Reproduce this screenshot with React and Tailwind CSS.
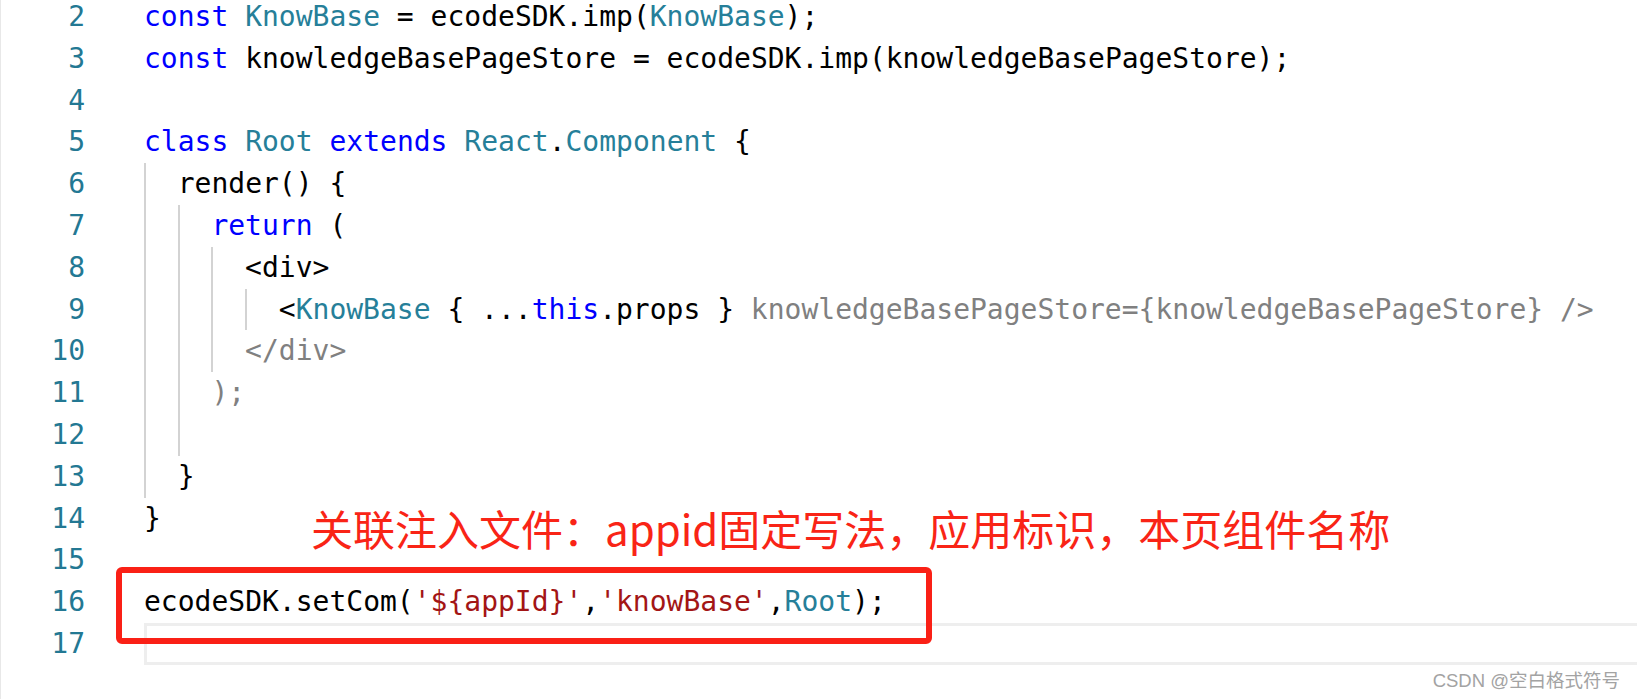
import React from 'react';

const C = {
  kw: 'text-[#0000ff]',
  type: 'text-[#267f99]',
  plain: 'text-[#000000]',
  gray: 'text-[#808080]',
  str: 'text-[#a31515]',
};

// each line: number, indent (columns), guide columns, tokens
const lines = [
  { n: 2, indent: 0, guides: [], tokens: [['const', 'kw'], [' ', 'plain'], ['KnowBase', 'type'], [' = ecodeSDK.imp(', 'plain'], ['KnowBase', 'type'], [');', 'plain']] },
  { n: 3, indent: 0, guides: [], tokens: [['const', 'kw'], [' knowledgeBasePageStore = ecodeSDK.imp(knowledgeBasePageStore);', 'plain']] },
  { n: 4, indent: 0, guides: [], tokens: [] },
  { n: 5, indent: 0, guides: [], tokens: [['class', 'kw'], [' ', 'plain'], ['Root', 'type'], [' ', 'plain'], ['extends', 'kw'], [' ', 'plain'], ['React', 'type'], ['.', 'plain'], ['Component', 'type'], [' {', 'plain']] },
  { n: 6, indent: 2, guides: [0], tokens: [['render() {', 'plain']] },
  { n: 7, indent: 4, guides: [0, 2], tokens: [['return', 'kw'], [' (', 'plain']] },
  { n: 8, indent: 6, guides: [0, 2, 4], tokens: [['<div>', 'plain']] },
  { n: 9, indent: 8, guides: [0, 2, 4, 6], tokens: [['<', 'plain'], ['KnowBase', 'type'], [' { ...', 'plain'], ['this', 'kw'], ['.props } ', 'plain'], ['knowledgeBasePageStore={knowledgeBasePageStore} />', 'gray']] },
  { n: 10, indent: 6, guides: [0, 2, 4], tokens: [['</div>', 'gray']] },
  { n: 11, indent: 4, guides: [0, 2], tokens: [[');', 'gray']] },
  { n: 12, indent: 4, guides: [0, 2], tokens: [] },
  { n: 13, indent: 2, guides: [0], tokens: [['}', 'plain']] },
  { n: 14, indent: 0, guides: [], tokens: [['}', 'plain']] },
  { n: 15, indent: 0, guides: [], tokens: [] },
  { n: 16, indent: 0, guides: [], tokens: [['ecodeSDK.setCom(', 'plain'], ["'${appId}'", 'str'], [',', 'plain'], ["'knowBase'", 'str'], [',', 'plain'], ['Root', 'type'], [');', 'plain']] },
  { n: 17, indent: 0, guides: [], tokens: [], current: true },
];

const CodeLine = ({ line }) => {
  const steps = [];
  for (let col = 0; col < line.indent; col += 2) steps.push(col);
  return (
    <div className="flex h-[41.8px] leading-[41.8px]">
      <div className="w-[84px] shrink-0 text-right text-[#237893]">{line.n}</div>
      <div
        className={
          'ml-[59px] flex-1 flex whitespace-pre ' +
          (line.current ? 'border-[3px] border-r-0 border-[#eeeeee]' : '')
        }
      >
        {steps.map((col) => (
          <span
            key={col}
            className={
              'inline-block w-[2ch] h-full ' +
              (line.guides.includes(col) ? 'border-l-2 border-[#d3d3d3]' : '')
            }
          />
        ))}
        {line.tokens.map(([text, kind], i) => (
          <span key={i} className={C[kind]}>{text}</span>
        ))}
      </div>
    </div>
  );
};

export default function App() {
  return (
    <div className="relative w-full h-[699px] overflow-hidden bg-white border-l border-[#e8e8e8]">
      {/* Code editor body */}
      <div className="-mt-[4px] text-[28px] font-['DejaVu_Sans_Mono',monospace]">
        {lines.map((line) => (
          <CodeLine key={line.n} line={line} />
        ))}
      </div>

      {/* Annotation overlay */}
      <div className="absolute left-[310px] top-[507px] text-[42px] leading-[42px] text-[#f92416] whitespace-nowrap font-['Noto_Sans_CJK_SC',sans-serif]">
        关联注入文件：appid固定写法，应用标识，本页组件名称
      </div>
      <div className="absolute left-[115px] top-[567px] w-[816px] h-[77px] border-[6px] border-[#fa2016] rounded-[6px]" />

      {/* Watermark */}
      <div className="absolute right-[17px] top-[670px] text-[18.5px] leading-[22px] text-[#a3a3a3] whitespace-nowrap font-['Liberation_Sans','Noto_Sans_CJK_SC',sans-serif]">
        CSDN @空白格式符号
      </div>
    </div>
  );
}
